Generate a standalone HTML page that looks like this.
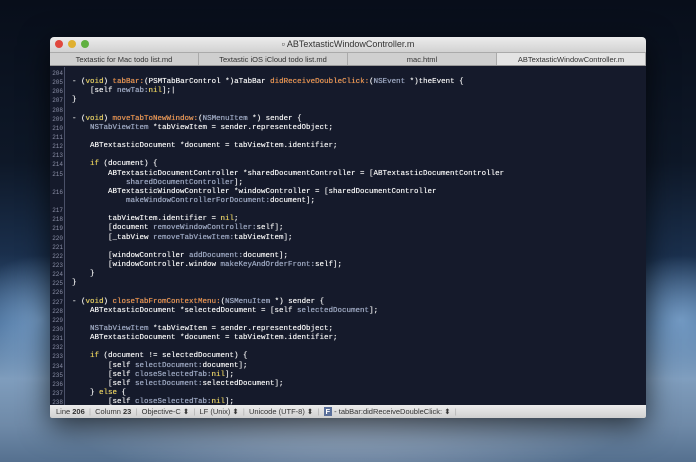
<!DOCTYPE html>
<html><head><style>
*{margin:0;padding:0;box-sizing:border-box}
body{width:696px;height:462px;overflow:hidden;position:relative;font-family:"Liberation Sans",sans-serif;
background:linear-gradient(180deg,#080e1a 0%,#0e1828 35%,#1a2f4c 55%,#3f6590 70%,#7f9dbd 82%,#6f8aa8 92%,#55708f 100%)}
.glow{position:absolute;left:0;top:300px;width:696px;height:162px;background:radial-gradient(ellipse at 50% 65%,rgba(205,215,230,.6),rgba(205,215,230,0) 60%)}
.cl{position:absolute;left:-40px;top:250px;width:160px;height:140px;background:radial-gradient(ellipse,rgba(150,190,230,.6),rgba(150,190,230,0) 65%)}
.cr{position:absolute;left:600px;top:250px;width:160px;height:140px;background:radial-gradient(ellipse,rgba(150,190,230,.6),rgba(150,190,230,0) 65%)}
.win{position:absolute;left:50px;top:37px;width:596px;height:381px;background:#15192a;box-shadow:0 8px 30px rgba(0,0,0,.7);border-radius:4px 4px 2px 2px;overflow:hidden}
.title{height:15px;background:linear-gradient(#ececec,#d2d2d2);position:relative;font-size:9px;color:#333;text-align:center;line-height:15px}
.dot{position:absolute;top:3px;width:8px;height:8px;border-radius:50%}
.tabs{height:14px;background:#cfcfcf;display:flex;border-bottom:1px solid #999;border-top:1px solid #aaa}
.tab{flex:1;font-size:7.5px;text-align:center;line-height:13px;color:#333;border-right:1px solid #aaa}
.tab.a{background:#e4e4e4}
.code{position:absolute;top:30px;left:0;right:0;height:338px;background:#151a2b;font-family:"Liberation Mono",monospace;font-size:7.5px;line-height:9.15px;color:#f2f2f2;padding-top:2px;text-shadow:0 0 .4px #fff}
.g{position:absolute;left:0;top:0;width:15px;height:100%;border-right:1px solid #4a5068}
.r{white-space:pre;height:9.15px;position:relative}
.n{position:absolute;left:0;width:13px;text-align:right;color:#8a8fa6;font-size:6px;text-shadow:none}
.t{position:absolute;left:22px}
.k{color:#e2c640}.m{color:#e8802e}.s{color:#8c9aba}
.status{position:absolute;bottom:0;left:0;right:0;height:13px;background:linear-gradient(#ececec,#d0d0d0);font-size:7.5px;color:#333;line-height:13px;padding-left:6px;white-space:pre}
.status b{font-weight:bold}
.sep{color:#aaa}
</style></head><body>
<div class="glow"></div><div class="cl"></div><div class="cr"></div>
<div class="win">
<div class="title"><span class="dot" style="left:5px;background:#e0483e"></span><span class="dot" style="left:18px;background:#e0b030"></span><span class="dot" style="left:31px;background:#60b040"></span>▫ ABTextasticWindowController.m</div>
<div class="tabs"><div class="tab">Textastic for Mac todo list.md</div><div class="tab">Textastic iOS iCloud todo list.md</div><div class="tab">mac.html</div><div class="tab a">ABTextasticWindowController.m</div></div>
<div class="code"><div class="g"></div>
<div class="r"><span class="n">204</span></div>
<div class="r"><span class="n">205</span><span class="t">- (<span class="k">void</span>) <span class="m">tabBar:</span>(PSMTabBarControl *)aTabBar <span class="m">didReceiveDoubleClick:</span>(<span class="s">NSEvent</span> *)theEvent {</span></div>
<div class="r"><span class="n">206</span><span class="t">    [self <span class="s">newTab:</span><span class="k">nil</span>];|</span></div>
<div class="r"><span class="n">207</span><span class="t">}</span></div>
<div class="r"><span class="n">208</span></div>
<div class="r"><span class="n">209</span><span class="t">- (<span class="k">void</span>) <span class="m">moveTabToNewWindow:</span>(<span class="s">NSMenuItem</span> *) sender {</span></div>
<div class="r"><span class="n">210</span><span class="t">    <span class="s">NSTabViewItem</span> *tabViewItem = sender.representedObject;</span></div>
<div class="r"><span class="n">211</span></div>
<div class="r"><span class="n">212</span><span class="t">    ABTextasticDocument *document = tabViewItem.identifier;</span></div>
<div class="r"><span class="n">213</span></div>
<div class="r"><span class="n">214</span><span class="t">    <span class="k">if</span> (document) {</span></div>
<div class="r"><span class="n">215</span><span class="t">        ABTextasticDocumentController *sharedDocumentController = [ABTextasticDocumentController</span></div>
<div class="r"><span class="t">            <span class="s">sharedDocumentController</span>];</span></div>
<div class="r"><span class="n">216</span><span class="t">        ABTextasticWindowController *windowController = [sharedDocumentController</span></div>
<div class="r"><span class="t">            <span class="s">makeWindowControllerForDocument:</span>document];</span></div>
<div class="r"><span class="n">217</span></div>
<div class="r"><span class="n">218</span><span class="t">        tabViewItem.identifier = <span class="k">nil</span>;</span></div>
<div class="r"><span class="n">219</span><span class="t">        [document <span class="s">removeWindowController:</span>self];</span></div>
<div class="r"><span class="n">220</span><span class="t">        [_tabView <span class="s">removeTabViewItem:</span>tabViewItem];</span></div>
<div class="r"><span class="n">221</span></div>
<div class="r"><span class="n">222</span><span class="t">        [windowController <span class="s">addDocument:</span>document];</span></div>
<div class="r"><span class="n">223</span><span class="t">        [windowController.window <span class="s">makeKeyAndOrderFront:</span>self];</span></div>
<div class="r"><span class="n">224</span><span class="t">    }</span></div>
<div class="r"><span class="n">225</span><span class="t">}</span></div>
<div class="r"><span class="n">226</span></div>
<div class="r"><span class="n">227</span><span class="t">- (<span class="k">void</span>) <span class="m">closeTabFromContextMenu:</span>(<span class="s">NSMenuItem</span> *) sender {</span></div>
<div class="r"><span class="n">228</span><span class="t">    ABTextasticDocument *selectedDocument = [self <span class="s">selectedDocument</span>];</span></div>
<div class="r"><span class="n">229</span></div>
<div class="r"><span class="n">230</span><span class="t">    <span class="s">NSTabViewItem</span> *tabViewItem = sender.representedObject;</span></div>
<div class="r"><span class="n">231</span><span class="t">    ABTextasticDocument *document = tabViewItem.identifier;</span></div>
<div class="r"><span class="n">232</span></div>
<div class="r"><span class="n">233</span><span class="t">    <span class="k">if</span> (document != selectedDocument) {</span></div>
<div class="r"><span class="n">234</span><span class="t">        [self <span class="s">selectDocument:</span>document];</span></div>
<div class="r"><span class="n">235</span><span class="t">        [self <span class="s">closeSelectedTab:</span><span class="k">nil</span>];</span></div>
<div class="r"><span class="n">236</span><span class="t">        [self <span class="s">selectDocument:</span>selectedDocument];</span></div>
<div class="r"><span class="n">237</span><span class="t">    } <span class="k">else</span> {</span></div>
<div class="r"><span class="n">238</span><span class="t">        [self <span class="s">closeSelectedTab:</span><span class="k">nil</span>];</span></div>
</div>
<div class="status">Line <b>206</b>  <span class="sep">|</span>  Column <b>23</b>  <span class="sep">|</span>  Objective-C ⬍  <span class="sep">|</span>  LF (Unix) ⬍  <span class="sep">|</span>  Unicode (UTF-8) ⬍  <span class="sep">|</span>  <span style="background:#5a6f9a;color:#fff;padding:0 2px;font-weight:bold">F</span> - tabBar:didReceiveDoubleClick: ⬍  <span class="sep">|</span></div>
</div>
</body></html>
